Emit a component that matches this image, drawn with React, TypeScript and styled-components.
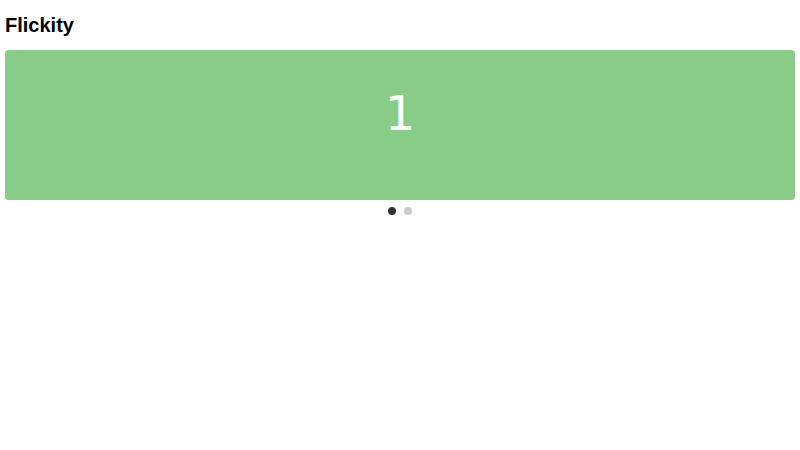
import React, { useState } from 'react'
import styled, { createGlobalStyle } from 'styled-components'

const GlobalStyle = createGlobalStyle`
  body {
    margin: 0;
    background: #fff;
    font-family: 'Liberation Sans', Arial, sans-serif;
  }
`

const Page = styled.div`
  padding: 14px 5px 0;
`

const Title = styled.h2`
  margin: 0 0 13px;
  font-size: 20px;
  line-height: 23px;
  font-weight: bold;
  color: #000;
`

const Carousel = styled.div`
  display: grid;
  gap: 7px;
`

const Viewport = styled.div`
  overflow: hidden;
  border-radius: 4px;
`

const Cell = styled.div`
  height: 150px;
  background: #8c8;
  display: flex;
  justify-content: center;
  padding-top: 33px;
  box-sizing: border-box;
`

const CellNumber = styled.span`
  color: #fff;
  font-family: 'DejaVu Sans', sans-serif;
  font-size: 48px;
  line-height: 60px;
`

const Dots = styled.ol`
  display: flex;
  justify-content: center;
  gap: 8px;
  margin: 0;
  padding: 0;
  list-style: none;
`

const Dot = styled.li<{ $selected: boolean }>`
  width: 8px;
  height: 8px;
  border-radius: 50%;
  background: #333;
  opacity: ${p => (p.$selected ? 1 : 0.25)};
  cursor: pointer;
`

const cells = ['1', '2']

export default function App() {
  const [index, setIndex] = useState(0)

  return (
    <Page>
      <GlobalStyle />
      <Title>Flickity</Title>
      <Carousel>
        <Viewport>
          <Cell>
            <CellNumber>{cells[index]}</CellNumber>
          </Cell>
        </Viewport>
        <Dots>
          {cells.map((c, i) => (
            <Dot key={c} $selected={i === index} onClick={() => setIndex(i)} />
          ))}
        </Dots>
      </Carousel>
    </Page>
  )
}
